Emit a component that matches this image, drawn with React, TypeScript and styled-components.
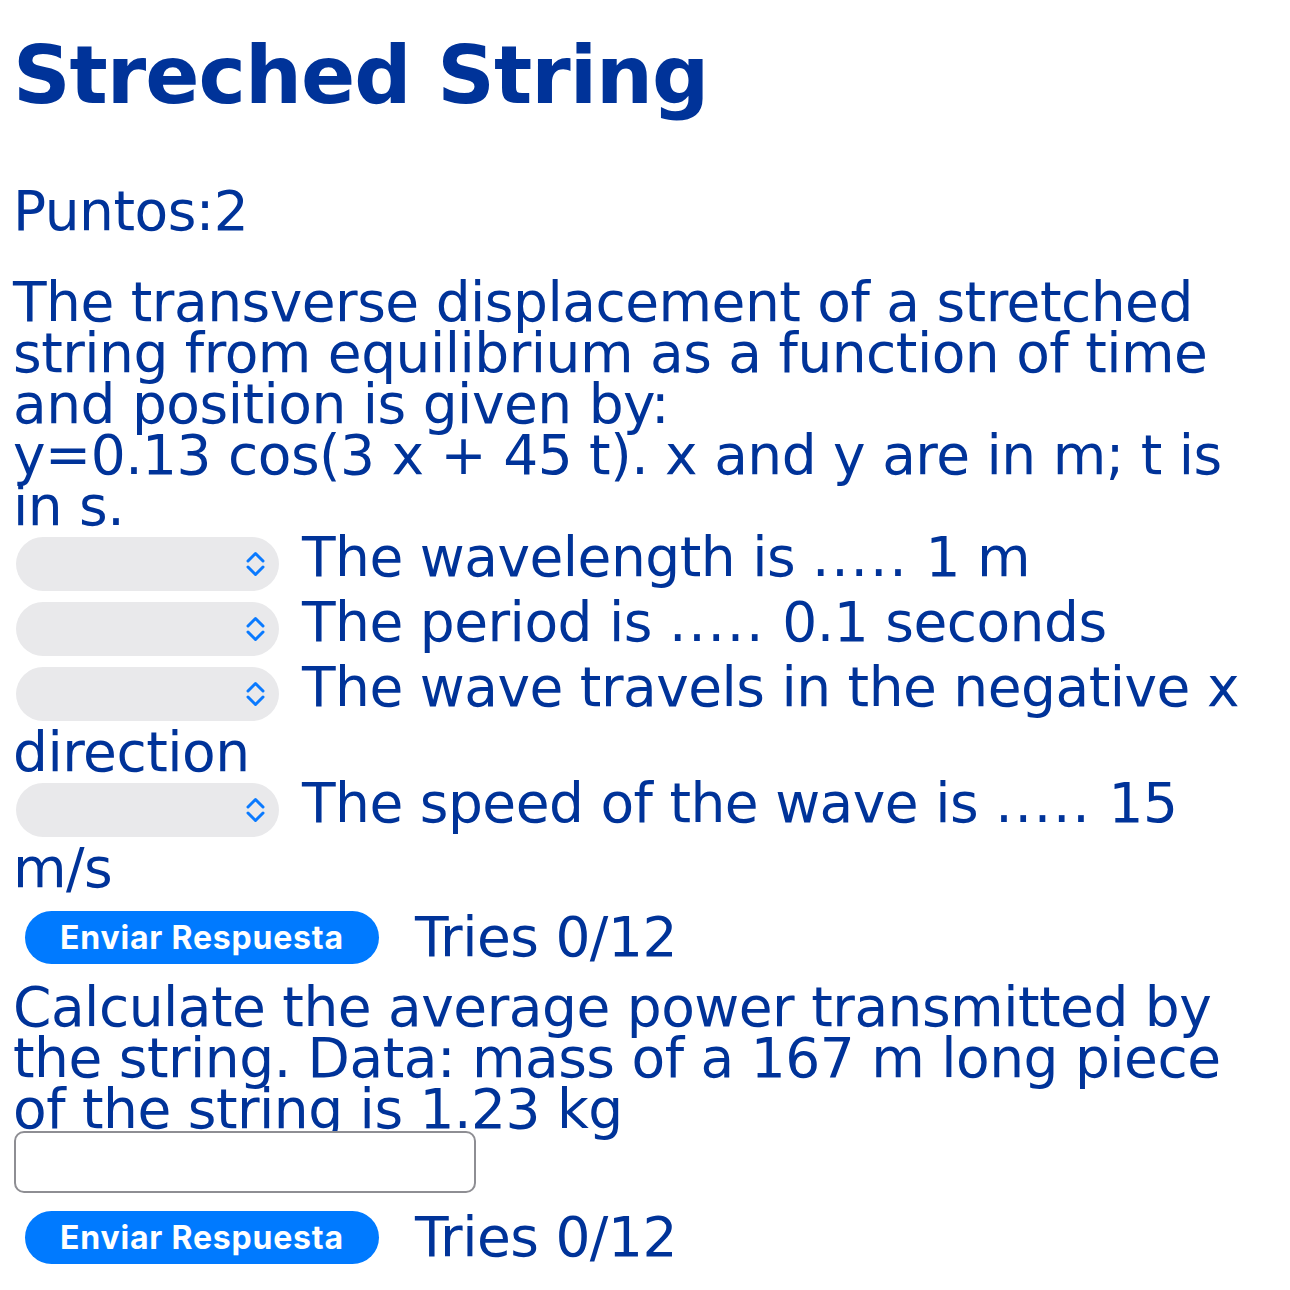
import React from "react";
import styled, { createGlobalStyle } from "styled-components";

const GlobalStyle = createGlobalStyle`
  html, body { margin: 0; padding: 0; background: #ffffff; }
  body {
    font-family: "DejaVu Sans", Verdana, sans-serif;
    color: #003399;
  }
`;

const Page = styled.div`
  padding: 0 13px 0 13px;
  font-size: 55px;
  line-height: 51px;
  letter-spacing: -0.5px;
`;

const Title = styled.h1`
  margin: 28px 0 0 0;
  font-size: 80px;
  line-height: 96px;
  font-weight: bold;
  letter-spacing: -1px;
`;

const Points = styled.div`
  margin-top: 62px;
`;

const Para = styled.div<{ $top?: number }>`
  margin-top: ${(p) => p.$top ?? 0}px;
`;

const Options = styled.div``;

const Dots = styled.span`
  letter-spacing: 1.8px;
`;

const SelectWrap = styled.span`
  display: inline-block;
  position: relative;
  width: 263px;
  height: 54px;
  margin: 0 6px 6px 3px;
  vertical-align: -21px;
  overflow: hidden;
`;

const NativeSelect = styled.select`
  appearance: none;
  -webkit-appearance: none;
  display: block;
  width: 100%;
  height: 100%;
  border: none;
  border-radius: 27px;
  background: #e9e9eb;
  margin: 0;
  padding: 0;
  outline: none;
  color: transparent;
`;

const Chevron = styled.svg`
  position: absolute;
  right: 13px;
  top: 13px;
  width: 21px;
  height: 28px;
  pointer-events: none;
`;

const SubmitRow = styled.div<{ $top: number }>`
  display: flex;
  align-items: center;
  gap: 36px;
  margin-top: ${(p) => p.$top}px;
  padding-left: 12px;
`;

const SubmitButton = styled.button`
  width: 354px;
  height: 53px;
  border: none;
  border-radius: 27px;
  background: #007aff;
  color: #ffffff;
  font-family: Inter, Roboto, "Liberation Sans", sans-serif;
  font-weight: 700;
  font-size: 32px;
  letter-spacing: 0.8px;
  padding: 0;
  cursor: pointer;
`;

const Tries = styled.span`
  line-height: 51px;
`;

const AnswerInput = styled.input`
  display: block;
  box-sizing: border-box;
  width: 462px;
  height: 62px;
  margin: -4px 0 0 1px;
  border: 2px solid #8e8e93;
  border-radius: 10px;
  background: #ffffff;
  padding: 0 10px;
  font-size: 30px;
  position: relative;
`;

function Select() {
  return (
    <SelectWrap>
      <NativeSelect defaultValue="">
        <option value=""></option>
        <option value="True">True</option>
        <option value="False">False</option>
      </NativeSelect>
      <Chevron viewBox="0 0 21 28" fill="none">
        <path
          d="M3 11 L10.5 3.5 L18 11"
          stroke="#0a7aff"
          strokeWidth="3"
          strokeLinecap="round"
          strokeLinejoin="round"
        />
        <path
          d="M3 17 L10.5 24.5 L18 17"
          stroke="#0a7aff"
          strokeWidth="3"
          strokeLinecap="round"
          strokeLinejoin="round"
        />
      </Chevron>
    </SelectWrap>
  );
}

export default function App() {
  return (
    <>
      <GlobalStyle />
      <Page>
        <Title>Streched String</Title>
        <Points>Puntos:2</Points>
        <Para $top={40}>
          The transverse displacement of a stretched string from equilibrium as a
          function of time and position is given by:
          <br />
          y=0.13 cos(3 x + 45 t). x and y are in m; t is in s.
        </Para>
        <Options>
          <Select /> The wavelength is <Dots>.....</Dots> 1 m
          <br />
          <Select /> The period is <Dots>.....</Dots> 0.1 seconds
          <br />
          <Select /> The wave travels in the negative x direction
          <br />
          <Select /> The speed of the wave is <Dots>.....</Dots> 15 m/s
        </Options>
        <SubmitRow $top={17}>
          <SubmitButton type="button">Enviar Respuesta</SubmitButton>
          <Tries>Tries 0/12</Tries>
        </SubmitRow>
        <Para $top={18}>
          Calculate the average power transmitted by the string. Data: mass of a
          167 m long piece of the string is 1.23 kg
        </Para>
        <AnswerInput type="text" />
        <SubmitRow $top={18}>
          <SubmitButton type="button">Enviar Respuesta</SubmitButton>
          <Tries>Tries 0/12</Tries>
        </SubmitRow>
      </Page>
    </>
  );
}
